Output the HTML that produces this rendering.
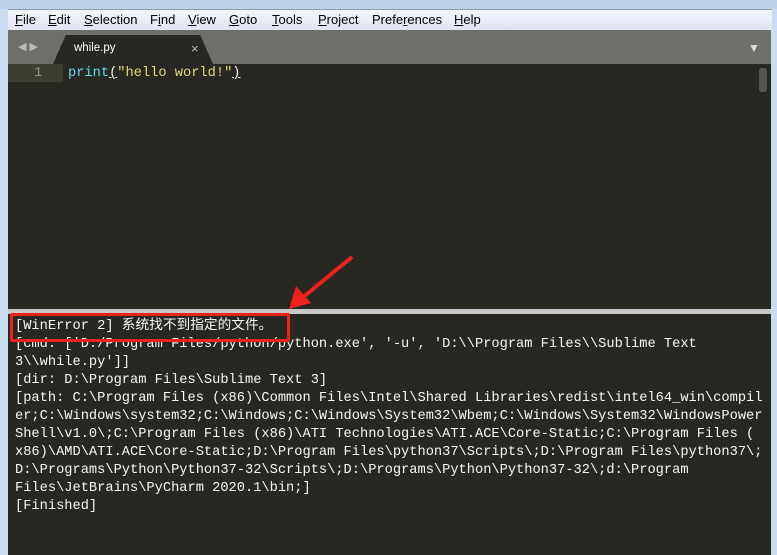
<!DOCTYPE html><html><head><style>
body{margin:0;width:777px;height:555px;overflow:hidden;background:#c9dcf0;position:relative;font-family:"Liberation Sans",sans-serif}
.a{position:absolute}
.mono{font-family:"Liberation Mono","Noto Sans CJK SC",monospace;font-size:13.7px;white-space:pre}
</style></head><body>
<div class="a" style="left:0;top:0;width:777px;height:9px;background:#bcd3ec"></div>
<div class="a" style="left:8px;top:9px;width:764px;height:21px;background:linear-gradient(#f4f6fb,#dde4f3);border-top:1px solid #8c9ab0"></div>
<div class="a" style="left:15px;top:12px;font-size:13px;color:#000">
<span style="position:absolute;left:0"><u>F</u>ile</span><span style="position:absolute;left:33px"><u>E</u>dit</span><span style="position:absolute;left:69px"><u>S</u>election</span><span style="position:absolute;left:135px">F<u>i</u>nd</span><span style="position:absolute;left:173px"><u>V</u>iew</span><span style="position:absolute;left:214px"><u>G</u>oto</span><span style="position:absolute;left:257px"><u>T</u>ools</span><span style="position:absolute;left:303px"><u>P</u>roject</span><span style="position:absolute;left:357px">Prefe<u>r</u>ences</span><span style="position:absolute;left:439px"><u>H</u>elp</span></div>
<div class="a" style="left:8px;top:30px;width:763px;height:34px;background:#6f6f69"></div>
<div class="a" style="left:18px;top:40px;color:#bbb;font-size:11px">◀ ▶</div>
<div class="a" style="left:53px;top:35px;width:160px;height:29px;background:#272822;clip-path:polygon(8% 0,92% 0,100% 100%,0 100%)"></div>
<div class="a" style="left:74px;top:42px;color:#fff;font-size:11.5px">while.py</div>
<div class="a" style="left:191px;top:41px;color:#bbb;font-size:13px">×</div>
<div class="a" style="left:748px;top:41px;color:#ddd;font-size:12px">▼</div>
<div class="a" style="left:8px;top:64px;width:763px;height:245px;background:#272822"></div>
<div class="a" style="left:8px;top:64px;width:55px;height:18px;background:#3e3d32"></div>
<div class="a" style="left:759px;top:68px;width:8px;height:24px;background:#555;border-radius:3px"></div>
<div class="a mono" style="left:34px;top:66px;color:#8f908a">1</div>
<div class="a mono" style="left:68px;top:66px"><span style="color:#66d9ef">print</span><span style="color:#f8f8f2;text-decoration:underline">(</span><span style="color:#e6db74">"hello world!"</span><span style="color:#f8f8f2;text-decoration:underline">)</span></div>
<div class="a" style="left:8px;top:309px;width:763px;height:5px;background:#c8c8c8"></div>
<div class="a" style="left:8px;top:314px;width:763px;height:241px;background:#272822"></div>
<div class="a mono" style="left:15px;top:318px;color:#f8f8f2;line-height:18px">[WinError 2] 系统找不到指定的文件。
[cmd: ['D:/Program Files/python/python.exe', '-u', 'D:\\Program Files\\Sublime Text
3\\while.py']]
[dir: D:\Program Files\Sublime Text 3]
[path: C:\Program Files (x86)\Common Files\Intel\Shared Libraries\redist\intel64_win\compil
er;C:\Windows\system32;C:\Windows;C:\Windows\System32\Wbem;C:\Windows\System32\WindowsPower
Shell\v1.0\;C:\Program Files (x86)\ATI Technologies\ATI.ACE\Core-Static;C:\Program Files (
x86)\AMD\ATI.ACE\Core-Static;D:\Program Files\python37\Scripts\;D:\Program Files\python37\;
D:\Programs\Python\Python37-32\Scripts\;D:\Programs\Python\Python37-32\;d:\Program
Files\JetBrains\PyCharm 2020.1\bin;]
[Finished]</div>
<div class="a" style="left:10px;top:313px;width:274px;height:23px;border:3px solid #f0201a;border-radius:2px"></div>
<svg class="a" style="left:0;top:0" width="777" height="555"><line x1="352" y1="257" x2="302" y2="298" stroke="#f0201a" stroke-width="4"/><polygon points="289,309 296,286 311,303" fill="#f0201a"/></svg>
</body></html>
